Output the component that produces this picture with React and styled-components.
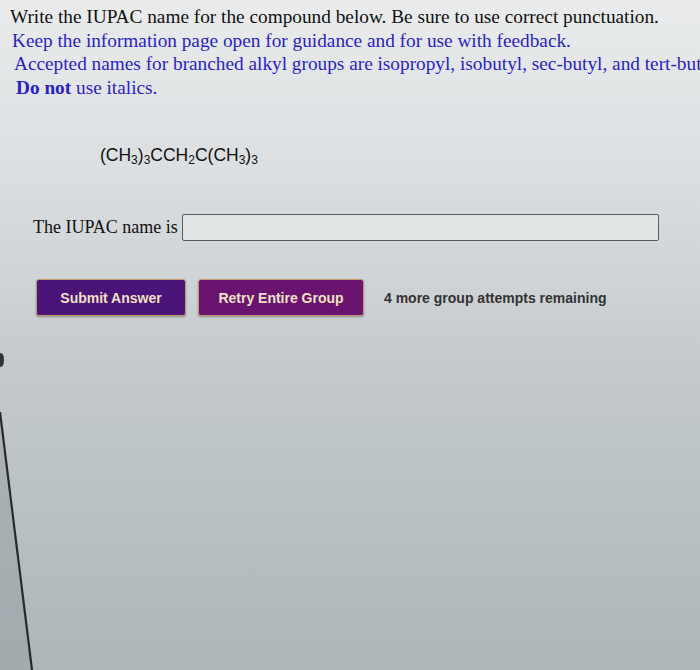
import React from "react";
import styled, { createGlobalStyle } from "styled-components";

const Global = createGlobalStyle`
  html, body { margin: 0; padding: 0; }
  body {
    width: 700px;
    height: 670px;
    overflow: hidden;
    background: linear-gradient(180deg, #e9ebec 0%, #dcdfe1 25%, #c4cacc 55%, #aeb6b9 100%);
    font-family: "Liberation Serif", "Times New Roman", serif;
  }
`;

const Page = styled.div`
  position: relative;
  width: 700px;
  height: 670px;
  box-sizing: border-box;
  padding: 5px 0 0 10px;
`;

const Instructions = styled.div`
  display: flex;
  flex-direction: column;
  font-size: 19.3px;
  line-height: 23.5px;
  white-space: nowrap;
`;

const Line = styled.div`
  color: ${(p) => (p.$blue ? "#2a1fc4" : "#111")};
  padding-left: ${(p) => p.$indent || 0}px;
`;

const Formula = styled.div`
  margin: 46px 0 0 90px;
  font-family: "Liberation Sans", Arial, sans-serif;
  font-size: 17.5px;
  color: #111;
  sub { font-size: 12px; vertical-align: -3px; line-height: 0; }
`;

const AnswerRow = styled.div`
  display: flex;
  align-items: center;
  margin: 48px 0 0 23px;
  font-size: 18px;
  color: #111;
`;

const AnswerInput = styled.div`
  margin-left: 4px;
  width: 475px;
  height: 25px;
  border: 1.5px solid #555a5c;
  border-radius: 2px;
  background: #e2e5e6;
`;

const ButtonRow = styled.div`
  display: flex;
  align-items: center;
  gap: 12px;
  margin: 38px 0 0 26px;
`;

const Button = styled.div`
  display: flex;
  align-items: center;
  justify-content: center;
  box-sizing: border-box;
  width: ${(p) => p.$w}px;
  height: 37px;
  border-radius: 3px;
  background: ${(p) => p.$bg};
  border: 1.5px solid #c79a6a;
  color: #f0e2c4;
  font-family: "Liberation Sans", Arial, sans-serif;
  font-weight: bold;
  font-size: 14px;
  box-shadow: 0 1px 2px rgba(0,0,0,0.35);
`;

const Remaining = styled.div`
  margin-left: 8px;
  font-family: "Liberation Sans", Arial, sans-serif;
  font-weight: bold;
  font-size: 14px;
  color: #333;
`;

const Bezel = styled.svg`
  position: absolute;
  left: 0;
  top: 0;
  pointer-events: none;
`;

export default function App() {
  return (
    <>
      <Global />
      <Page>
        <Instructions>
          <Line>Write the IUPAC name for the compound below. Be sure to use correct punctuation.</Line>
          <Line $blue $indent={2}>Keep the information page open for guidance and for use with feedback.</Line>
          <Line $blue $indent={4}>Accepted names for branched alkyl groups are isopropyl, isobutyl, sec-butyl, and tert-butyl.</Line>
          <Line $blue $indent={6}><b>Do not</b> use italics.</Line>
        </Instructions>
        <Formula>
          (CH<sub>3</sub>)<sub>3</sub>CCH<sub>2</sub>C(CH<sub>3</sub>)<sub>3</sub>
        </Formula>
        <AnswerRow>
          The IUPAC name is
          <AnswerInput />
        </AnswerRow>
        <ButtonRow>
          <Button $w={150} $bg="#4a1479">Submit Answer</Button>
          <Button $w={166} $bg="#6a1470">Retry Entire Group</Button>
          <Remaining>4 more group attempts remaining</Remaining>
        </ButtonRow>
        <Bezel width="700" height="670" viewBox="0 0 700 670">
          <polygon points="0,412 32,670 0,670" fill="#9aa3a6" opacity="0.6" />
          <line x1="0" y1="412" x2="32" y2="670" stroke="#2a2a2a" strokeWidth="2.2" />
          <ellipse cx="1" cy="360" rx="3" ry="7" fill="#333" />
        </Bezel>
      </Page>
    </>
  );
}
